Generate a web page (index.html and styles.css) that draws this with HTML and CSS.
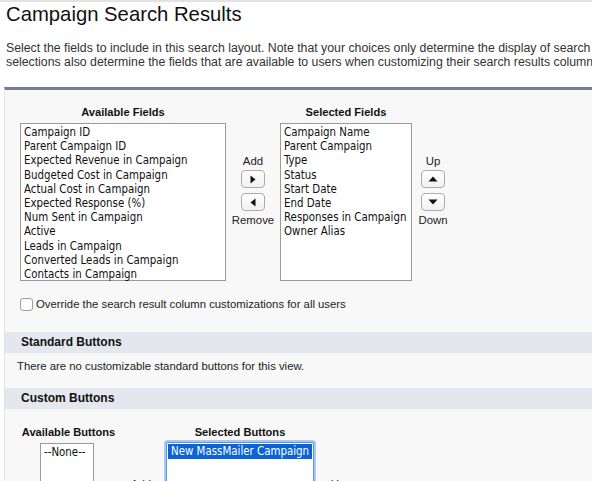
FILE: index.html
```html
<!DOCTYPE html>
<html>
<head>
<meta charset="utf-8">
<link rel="stylesheet" href="styles.css">
</head>
<body>
<div class="page">
  <div class="topline"></div>
  <h1 class="title">Campaign Search Results</h1>
  <p class="desc">Select the fields to include in this search layout. Note that your choices only determine the display of search results for users who have not customized their columns. Your<br>selections also determine the fields that are available to users when customizing their search results columns.</p>

  <div class="panel">
    <div class="picker picker-fields">
      <div class="col col-avail-fields">
        <div class="col-head">Available Fields</div>
        <div class="listbox lb-avail-fields">
          <div class="opt">Campaign ID</div>
          <div class="opt">Parent Campaign ID</div>
          <div class="opt">Expected Revenue in Campaign</div>
          <div class="opt">Budgeted Cost in Campaign</div>
          <div class="opt">Actual Cost in Campaign</div>
          <div class="opt">Expected Response (%)</div>
          <div class="opt">Num Sent in Campaign</div>
          <div class="opt">Active</div>
          <div class="opt">Leads in Campaign</div>
          <div class="opt">Converted Leads in Campaign</div>
          <div class="opt">Contacts in Campaign</div>
        </div>
      </div>
      <div class="mover mover-lr">
        <span class="mv-label">Add</span>
        <button class="arrow-btn" type="button"><svg width="6" height="9" viewBox="0 0 6 9"><path d="M0.5 0.5 L5.5 4.5 L0.5 8.5 Z" fill="#111"/></svg></button>
        <button class="arrow-btn btn-second" type="button"><svg width="6" height="9" viewBox="0 0 6 9"><path d="M5.5 0.5 L0.5 4.5 L5.5 8.5 Z" fill="#111"/></svg></button>
        <span class="mv-label">Remove</span>
      </div>
      <div class="col col-sel-fields">
        <div class="col-head">Selected Fields</div>
        <div class="listbox lb-sel-fields">
          <div class="opt">Campaign Name</div>
          <div class="opt">Parent Campaign</div>
          <div class="opt">Type</div>
          <div class="opt">Status</div>
          <div class="opt">Start Date</div>
          <div class="opt">End Date</div>
          <div class="opt">Responses in Campaign</div>
          <div class="opt">Owner Alias</div>
        </div>
      </div>
      <div class="mover mover-ud">
        <span class="mv-label">Up</span>
        <button class="arrow-btn" type="button"><svg width="10" height="6" viewBox="0 0 10 6"><path d="M0.5 5.5 L5 0.5 L9.5 5.5 Z" fill="#111"/></svg></button>
        <button class="arrow-btn btn-second" type="button"><svg width="10" height="6" viewBox="0 0 10 6"><path d="M0.5 0.5 L5 5.5 L9.5 0.5 Z" fill="#111"/></svg></button>
        <span class="mv-label">Down</span>
      </div>
    </div>

    <label class="override"><span class="cb"></span>Override the search result column customizations for all users</label>

    <div class="band band-first">Standard Buttons</div>
    <div class="note">There are no customizable standard buttons for this view.</div>

    <div class="band band-second">Custom Buttons</div>

    <div class="picker picker-btns">
      <div class="col col-avail-btns">
        <div class="col-head">Available Buttons</div>
        <div class="listbox lb-avail-btns">
          <div class="opt">--None--</div>
        </div>
      </div>
      <div class="mover mover-btns-lr">
        <span class="mv-label">Add</span>
      </div>
      <div class="col col-sel-btns">
        <div class="col-head">Selected Buttons</div>
        <div class="listbox lb-sel-btns">
          <div class="opt opt-selected">New MassMailer Campaign</div>
        </div>
      </div>
      <div class="mover mover-btns-ud">
        <span class="mv-label">Up</span>
      </div>
    </div>
  </div>
</div>
</body>
</html>
```

FILE: styles.css
```css
html, body {
  margin: 0;
  padding: 0;
  overflow: hidden;
  background: #fff;
}

body {
  font-family: "Liberation Sans", Arial, sans-serif;
  color: #222;
}

.page {
  width: 760px;
}

.topline {
  height: 2px;
  background: #e2e2e2;
}

.title {
  margin: 0 0 0 6px;
  font-size: 20.3px;
  font-weight: normal;
  line-height: 24px;
  color: #111;
}

.desc {
  margin: 15px 0 0 6px;
  font-size: 12.3px;
  line-height: 14px;
  color: #333;
  white-space: nowrap;
}

.panel {
  margin: 18px 0 0 4px;
  border-top: 3px solid #737e96;
  border-left: 1px solid #e4e4e4;
  background: #f8f8f8;
  padding-bottom: 40px;
}

.picker {
  display: flex;
  align-items: flex-start;
}

.picker-fields {
  padding: 15px 0 0 15px;
}

.col {
  display: flex;
  flex-direction: column;
  align-items: center;
}

.col-head {
  font-weight: bold;
  font-size: 11.1px;
  line-height: 14px;
  color: #111;
  white-space: nowrap;
}

.listbox {
  box-sizing: border-box;
  background: #fff;
  border: 1px solid #9a9a9a;
  margin-top: 4px;
  padding: 1px 0 0 3px;
  font-family: "DejaVu Sans Condensed", "DejaVu Sans", sans-serif;
  font-stretch: condensed;
  font-size: 11.4px;
  color: #111;
}

.opt {
  line-height: 14.2px;
  height: 14.2px;
  white-space: nowrap;
}

.lb-avail-fields {
  width: 206px;
  height: 158px;
}

.lb-sel-fields {
  width: 132px;
  height: 158px;
}

.mover {
  display: flex;
  flex-direction: column;
  align-items: center;
  font-size: 11.4px;
  line-height: 14px;
  color: #222;
}

.mover-lr {
  width: 54px;
  margin-top: 49px;
}

.mover-ud {
  width: 42px;
  margin-top: 49px;
}

.mv-label {
  display: block;
  white-space: nowrap;
}

.arrow-btn {
  box-sizing: border-box;
  width: 24px;
  height: 18px;
  margin: 2px 0;
  padding: 0;
  border: 1px solid #ababab;
  border-radius: 4px;
  background: linear-gradient(#ffffff, #f1f1f1);
  display: flex;
  align-items: center;
  justify-content: center;
}

.btn-second {
  margin-top: 3px;
}

.override {
  display: flex;
  align-items: center;
  margin: 16px 0 0 15px;
  font-size: 11.34px;
  line-height: 14px;
  color: #222;
  white-space: nowrap;
}

.cb {
  box-sizing: border-box;
  width: 13px;
  height: 13px;
  border: 1px solid #9c9c9c;
  border-radius: 3px;
  background: #fff;
  margin-right: 3px;
}

.band {
  height: 21px;
  line-height: 20px;
  background: #e4e7ee;
  padding-left: 16px;
  font-size: 12px;
  font-weight: bold;
  color: #111;
  white-space: nowrap;
}

.band-first {
  margin-top: 21px;
}

.note {
  margin: 6px 0 0 12px;
  font-size: 11.34px;
  line-height: 14px;
  color: #222;
  white-space: nowrap;
}

.band-second {
  margin-top: 15px;
}

.picker-btns {
  padding: 16px 0 0 16px;
}

.col-avail-btns {
  width: 95px;
}

.col-sel-btns {
  width: 148px;
}

.lb-avail-btns {
  width: 54px;
  height: 70px;
  margin-top: 4px;
  margin-right: 3px;
}

.lb-sel-btns {
  width: 148px;
  height: 70px;
  margin-top: 3px;
  padding: 1px 1px 0 1px;
  border: 1px solid #5a94e4;
  box-shadow: 0 0 0 2px #a9c8f3;
  border-radius: 2px;
}

.opt-selected {
  background: #0b63d6;
  color: #fff;
  padding-left: 3px;
  height: 15px;
  line-height: 15px;
}

.mover-btns-lr {
  width: 50px;
  margin-top: 52px;
}

.mover-btns-ud {
  width: 48px;
  margin-top: 52px;
}
```
